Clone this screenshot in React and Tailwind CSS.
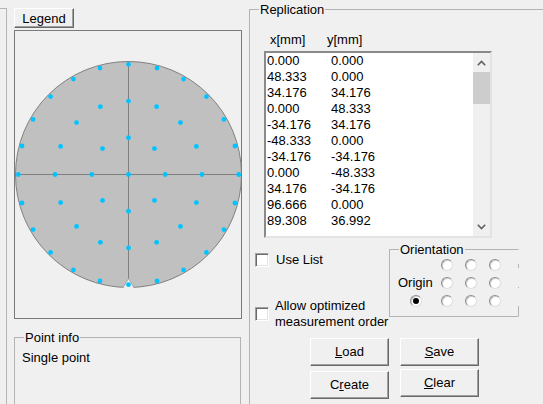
const MM = 0.76;
const CX = 113.5;
const CY = 143.5;
const R = 113;

const rows = [
  ['0.000', '0.000'],
  ['48.333', '0.000'],
  ['34.176', '34.176'],
  ['0.000', '48.333'],
  ['-34.176', '34.176'],
  ['-48.333', '0.000'],
  ['-34.176', '-34.176'],
  ['0.000', '-48.333'],
  ['34.176', '-34.176'],
  ['96.666', '0.000'],
  ['89.308', '36.992'],
];

// center + three rings of 8 / 16 / 24 sites
const sites = (() => {
  const pts = [[0, 0]];
  [[1, 8], [2, 16], [3, 24]].forEach(([k, n]) => {
    for (let i = 0; i < n; i++) {
      const a = (i * 2 * Math.PI) / n;
      pts.push([48.333 * k * Math.cos(a), 48.333 * k * Math.sin(a)]);
    }
  });
  return pts;
})();

const btn =
  'flex items-center justify-center bg-[#f0f0f0] border border-t-white border-l-white border-r-[#696969] border-b-[#696969] shadow-[inset_-1px_-1px_0_#a0a0a0]';

const Radio = ({ checked }) => (
  <div className="w-[12px] h-[12px] rounded-full bg-white border border-t-[#8c8c8c] border-l-[#8c8c8c] border-r-[#dcdcdc] border-b-[#dcdcdc] shadow-[inset_1px_1px_0_#cfcfcf] flex items-center justify-center">
    {checked && <div className="w-[6px] h-[6px] rounded-full bg-black" />}
  </div>
);

const Check = () => (
  <div className="w-[14px] h-[14px] shrink-0 bg-white border border-t-[#a0a0a0] border-l-[#a0a0a0] border-r-white border-b-white shadow-[inset_1px_1px_0_#696969,inset_-1px_-1px_0_#e3e3e3]" />
);

const Chevron = ({ up }) => (
  <svg width="9" height="6" viewBox="0 0 9 6">
    <path
      d={up ? 'M0.8 5.2 L4.5 1.5 L8.2 5.2' : 'M0.8 0.8 L4.5 4.5 L8.2 0.8'}
      fill="none"
      stroke="#606060"
      strokeWidth="1.6"
    />
  </svg>
);

const Wafer = () => (
  <svg width="226" height="287" viewBox="0 0 226 287">
    <circle cx={CX} cy={CY} r={R} fill="#c0c0c0" stroke="#808080" strokeWidth="1" />
    <polygon points="107,259 113.5,247.5 120,259" fill="#f0f0f0" />
    <polyline points="107.9,256.8 113.5,247.5 119.1,256.8" fill="none" stroke="#a8a8a8" strokeWidth="1" />
    <line x1={CX} y1={CY - R} x2={CX} y2="247.5" stroke="#808080" strokeWidth="1" />
    <line x1="0" y1={CY} x2="226" y2={CY} stroke="#808080" strokeWidth="1" />
    {sites.map(([x, y], i) => (
      <circle key={i} cx={CX + x * MM} cy={CY - y * MM} r="2.4" fill="#00c3ff" />
    ))}
  </svg>
);

export default function App() {
  return (
    <div className="w-[543px] h-[404px] overflow-hidden bg-[#f0f0f0] flex font-['Liberation_Sans',Arial,sans-serif] text-[13px] text-black">
      {/* edge of the neighbouring panel */}
      <div className="w-[7px] pt-[8px] shrink-0">
        <div className="h-full border-t border-r border-[#b4b4b4]" />
      </div>

      {/* wafer map column */}
      <div className="w-[242px] shrink-0 pl-[7px] pt-[8px]">
        <button className={`${btn} w-[60px] h-[20px] leading-[15px]`}>Legend</button>
        <div className="mt-[2px] w-[228px] h-[289px] border border-[#7a7a7a]">
          <Wafer />
        </div>
        <fieldset className="mt-[11px] w-[227px] h-[120px] border border-[#b4b4b4]">
          <legend className="ml-[9px] px-[1px] leading-[15px]">Point info</legend>
          <div className="pl-[7px] pt-[5px] leading-[15px]">Single point</div>
        </fieldset>
      </div>

      {/* replication */}
      <div className="pt-[2px] shrink-0">
        <fieldset className="w-[300px] h-[420px] border border-[#b4b4b4]">
          <legend className="ml-[9px] px-[1px] leading-[15px]">Replication</legend>

          <div className="pl-[14px]">
            <div className="mt-[15px] pl-[6px] flex leading-[15px]">
              <span className="w-[57px]">x[mm]</span>
              <span>y[mm]</span>
            </div>
            <div className="mt-[4px] w-[228px] h-[187px] bg-white border-2 border-t-[#8a8a8a] border-l-[#8a8a8a] border-r-[#e3e3e3] border-b-[#e3e3e3] flex">
              <div className="flex-1 pl-[1px]">
                {rows.map(([x, y], i) => (
                  <div key={i} className="flex h-[16px] leading-[16px]">
                    <span className="w-[64px]">{x}</span>
                    <span>{y}</span>
                  </div>
                ))}
              </div>
              <div className="w-[17px] bg-[#f0f0f0] flex flex-col items-center">
                <div className="h-[19px] flex items-center justify-center">
                  <Chevron up />
                </div>
                <div className="w-full h-[32px] bg-[#cdcdcd]" />
                <div className="flex-1" />
                <div className="h-[19px] flex items-center justify-center">
                  <Chevron />
                </div>
              </div>
            </div>
          </div>

          <div className="mt-[4px] ml-[5px] flex">
            <div className="w-[134px] shrink-0">
              <div className="mt-[10px] flex items-center gap-[7px] leading-[15px]">
                <Check />
                <span>Use List</span>
              </div>
              <div className="mt-[31px] flex items-center gap-[6px]">
                <Check />
                <span className="leading-[16px] whitespace-nowrap">
                  Allow optimized
                  <br />
                  measurement order
                </span>
              </div>
            </div>

            <fieldset className="relative w-[130px] h-[75px] border border-r-transparent border-[#b4b4b4]">
              <legend className="ml-[9px] px-[1px] leading-[15px]">Orientation</legend>
              <div className="absolute right-[-1px] top-[7px] bottom-0 w-px flex flex-col">
                <div className="h-[4px] bg-[#b4b4b4]" />
                <div className="mt-[19px] h-px bg-[#b4b4b4]" />
                <div className="mt-[18px] h-px bg-[#b4b4b4]" />
                <div className="flex-1" />
                <div className="h-[9px] bg-[#b4b4b4]" />
              </div>
              <div className="flex -mt-px">
                <div className="w-[45px]">
                  <div className="h-[18px]" />
                  <div className="h-[18px] pl-[8px] leading-[18px]">Origin</div>
                  <div className="h-[18px] pl-[20px] flex items-center">
                    <Radio checked />
                  </div>
                </div>
                <div className="grid grid-cols-[24px_24px_24px] grid-rows-[18px_18px_18px]">
                  {Array.from({ length: 9 }).map((_, i) => (
                    <div key={i} className="flex items-center justify-center">
                      <Radio />
                    </div>
                  ))}
                </div>
              </div>
            </fieldset>
          </div>

          <div className="mt-[8px] ml-[60px] flex gap-[11px]">
            <div className="flex flex-col gap-[5px]">
              <button className={`${btn} w-[79px] h-[28px]`}>
                <span><span className="underline">L</span>oad</span>
              </button>
              <button className={`${btn} w-[79px] h-[28px]`}>
                <span>C<span className="underline">r</span>eate</span>
              </button>
            </div>
            <div className="flex flex-col gap-[3px]">
              <button className={`${btn} w-[79px] h-[28px]`}>
                <span><span className="underline">S</span>ave</span>
              </button>
              <button className={`${btn} w-[79px] h-[28px]`}>
                <span><span className="underline">C</span>lear</span>
              </button>
            </div>
          </div>
        </fieldset>
      </div>
    </div>
  );
}
